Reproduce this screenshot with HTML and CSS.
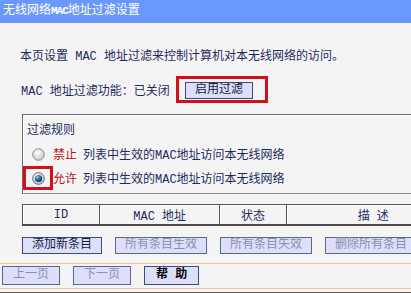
FILE: index.html
```html
<!DOCTYPE html>
<html lang="zh-CN">
<head>
<meta charset="utf-8">
<title>无线网络MAC地址过滤设置</title>
<link rel="stylesheet" href="styles.css">
</head>
<body>
<div class="page">
  <div class="title">无线网络<span class="tmac">MAC</span>地址过滤设置</div>
  <div class="main">
    <p class="intro">本页设置 MAC 地址过滤来控制计算机对本无线网络的访问。</p>
    <div class="status-row">
      <span class="status-text">MAC 地址过滤功能：已关闭</span>
      <span class="mark mark-btn"><button class="btn">启用过滤</button></span>
    </div>
    <div class="rules">
      <div class="rules-title">过滤规则</div>
      <div class="rule-row">
        <span class="radio-cell">
          <svg class="radio" width="13" height="13" viewBox="0 0 13 13">
            <defs>
              <radialGradient id="g1" cx="40%" cy="35%" r="70%">
                <stop offset="0" stop-color="#ffffff"/>
                <stop offset="1" stop-color="#c4c4c4"/>
              </radialGradient>
            </defs>
            <circle cx="6.5" cy="6.5" r="5.8" fill="url(#g1)" stroke="#8c8c8c" stroke-width="1"/>
          </svg>
        </span>
        <span class="red">禁止</span>
        <span class="rule-text">列表中生效的MAC地址访问本无线网络</span>
      </div>
      <div class="rule-row">
        <span class="radio-cell mark">
          <svg class="radio" width="13" height="13" viewBox="0 0 13 13">
            <defs>
              <radialGradient id="g2" cx="40%" cy="35%" r="70%">
                <stop offset="0" stop-color="#ffffff"/>
                <stop offset="1" stop-color="#b8c0c8"/>
              </radialGradient>
              <radialGradient id="g3" cx="35%" cy="30%" r="75%">
                <stop offset="0" stop-color="#9cc8ec"/>
                <stop offset="0.5" stop-color="#2a6aa8"/>
                <stop offset="1" stop-color="#0c2c58"/>
              </radialGradient>
            </defs>
            <circle cx="6.5" cy="6.5" r="5.8" fill="url(#g2)" stroke="#5a6a7a" stroke-width="1"/>
            <circle cx="6.5" cy="6.5" r="3.6" fill="url(#g3)"/>
          </svg>
        </span>
        <span class="red">允许</span>
        <span class="rule-text">列表中生效的MAC地址访问本无线网络</span>
      </div>
    </div>
    <table class="list">
      <tr>
        <th class="c-id">ID</th>
        <th class="c-mac">MAC 地址</th>
        <th class="c-state">状态</th>
        <th class="c-desc">描 述</th>
      </tr>
    </table>
    <div class="btn-row">
      <button class="btn">添加新条目</button>
      <button class="btn disabled">所有条目生效</button>
      <button class="btn disabled">所有条目失效</button>
      <button class="btn disabled">删除所有条目</button>
    </div>
  </div>
  <div class="footer">
    <button class="btn small disabled">上一页</button>
    <button class="btn small disabled">下一页</button>
    <button class="btn small help">帮 助</button>
  </div>
  <div class="bottom-band"></div>
</div>
</body>
</html>
```
FILE: styles.css
```css
html, body {
  margin: 0;
  padding: 0;
  background: #f4f4f4;
}
body {
  width: 411px;
  height: 293px;
  overflow: hidden;
  font-family: "Liberation Mono", "Noto Sans CJK SC", monospace;
  font-size: 12px;
  color: #1e2b5e;
}
.page {
  width: 460px;
}
.title {
  height: 23px;
  line-height: 23px;
  background: #6a98fa;
  color: #ffffff;
  padding-left: 3px;
  white-space: nowrap;
}
.tmac {
  font-weight: bold;
  font-size: 11px;
  letter-spacing: -1px;
}
.main {
  padding-left: 20px;
}
.intro {
  margin: 26px 0 0 0;
  line-height: 16px;
  white-space: nowrap;
}
.status-row {
  display: flex;
  align-items: center;
  margin-top: 11px;
  height: 27px;
  padding-left: 1px;
}
.status-text {
  width: 155px;
  white-space: nowrap;
}
.mark {
  border: 3px solid #d0101a;
  box-sizing: border-box;
}
.mark-btn {
  display: flex;
  align-items: center;
  height: 27px;
  padding: 2px 12px 0 6px;
}
.btn {
  font-family: "Liberation Mono", "Noto Sans CJK SC", monospace;
  font-size: 12px;
  color: #141c40;
  background: #dcdefa;
  border: 1px solid #3c4a7c;
  height: 17px;
  line-height: 15px;
  padding: 0 9px;
  margin: 0;
  white-space: nowrap;
  border-radius: 0;
}
.btn.disabled {
  color: #8a90a8;
  border-color: #5a6890;
}
.rules {
  margin: 11px 0 0 2px;
  border-top: 1px solid #6a6a6a;
  border-left: 1px solid #6a6a6a;
  border-bottom: 1px solid #8a8a8a;
  box-shadow: inset 1px 1px 0 #ffffff;
  padding: 5px 0 3px 0;
}
.rules-title {
  line-height: 22px;
  padding-left: 4px;
}
.rule-row {
  display: flex;
  align-items: center;
  height: 24px;
  white-space: nowrap;
}
.radio-cell {
  width: 30px;
  height: 24px;
  display: flex;
  align-items: center;
  justify-content: center;
}
.radio {
  display: block;
}
.red {
  color: #b3121a;
}
.rule-text {
  margin-left: 6px;
}
.list {
  margin: 10px 0 0 2px;
  border-collapse: collapse;
  border-top: 1px solid #555555;
  border-bottom: 2px solid #4a4a4a;
  border-left: 1px solid #555555;
}
.list th {
  font-weight: normal;
  height: 19px;
  padding: 0;
  text-align: center;
  border-left: 1px solid #555555;
  box-shadow: inset 1px 1px 0 #ffffff;
}
.c-id { width: 77px; }
.c-mac { width: 121px; }
.c-state { width: 66px; }
.c-desc { width: 176px; }
.btn-row {
  display: flex;
  gap: 13px;
  margin: 11px 0 0 2px;
}
.footer {
  margin-top: 9px;
  border-top: 1px solid #f5c490;
  border-bottom: 1px solid #f5c490;
  padding: 2px 0 3px 2px;
  display: flex;
  gap: 13px;
}
.btn.small {
  height: 19px;
  line-height: 17px;
  padding: 0 10px;
}
.btn.help {
  color: #000000;
  font-weight: bold;
  padding: 0 11px;
}
.bottom-band {
  margin-top: 3px;
  height: 10px;
  background: #5e5e5e;
}
```
